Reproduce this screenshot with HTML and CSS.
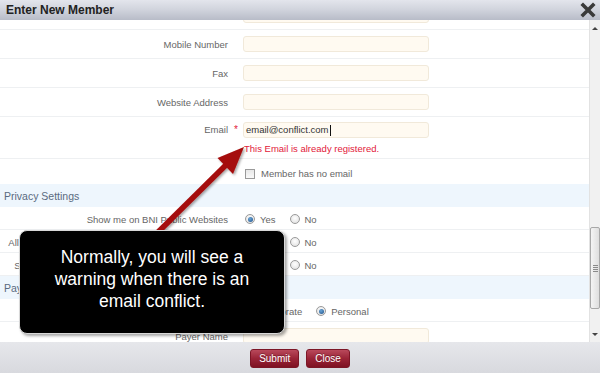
FILE: index.html
```html
<!DOCTYPE html>
<html>
<head>
<meta charset="utf-8">
<link rel="stylesheet" href="styles.css">
</head>
<body>
<div class="dialog">
  <div class="titlebar">
    <span class="title">Enter New Member</span>
    <svg class="close" width="16" height="16" viewBox="0 0 16 16"><path d="M3 3 L13 13 M13 3 L3 13" stroke="#3a3a3a" stroke-width="3.6" stroke-linecap="square"/></svg>
  </div>
  <div class="body">
    <div class="content">
      <div class="form">
        <div class="row"><div class="label"></div><div class="req"></div><div class="field"><div class="input"></div></div></div>
        <div class="row"><div class="label">Mobile Number</div><div class="req"></div><div class="field"><div class="input"></div></div></div>
        <div class="row"><div class="label">Fax</div><div class="req"></div><div class="field"><div class="input"></div></div></div>
        <div class="row"><div class="label">Website Address</div><div class="req"></div><div class="field"><div class="input"></div></div></div>
        <div class="row email-row">
          <div class="label">Email</div><div class="req">*</div>
          <div class="field col">
            <div class="input filled">email@conflict.com<span class="caret"></span></div>
            <div class="error">This Email is already registered.</div>
          </div>
        </div>
        <div class="row check-row"><div class="label"></div><div class="req"></div><div class="field"><span class="checkbox"></span><span class="opt">Member has no email</span></div></div>
        <div class="section">Privacy Settings</div>
        <div class="row small"><div class="label">Show me on BNI Public Websites</div><div class="req"></div><div class="field"><span class="radio on"></span><span class="opt">Yes</span><span class="radio"></span><span class="opt">No</span></div></div>
        <div class="row small"><div class="label">Allow all other BNI members to contact me via email</div><div class="req"></div><div class="field"><span class="radio on"></span><span class="opt">Yes</span><span class="radio"></span><span class="opt">No</span></div></div>
        <div class="row small"><div class="label">Show my contact details to the other BNI members</div><div class="req"></div><div class="field"><span class="radio on"></span><span class="opt">Yes</span><span class="radio"></span><span class="opt">No</span></div></div>
        <div class="section">Payment Details</div>
        <div class="row small"><div class="label">Payer Type</div><div class="req"></div><div class="field"><span class="radio"></span><span class="opt">Corporate</span><span class="radio on"></span><span class="opt">Personal</span></div></div>
        <div class="row"><div class="label">Payer Name</div><div class="req"></div><div class="field"><div class="input"></div></div></div>
      </div>
    </div>
    <div class="scrollbar">
      <div class="sb-btn"><span class="tri up"></span></div>
      <div class="sb-track"><div class="sb-thumb"><span class="grip"></span><span class="grip"></span><span class="grip"></span><span class="grip"></span></div></div>
      <div class="sb-btn"><span class="tri down"></span></div>
    </div>
  </div>
  <div class="footer">
    <button class="btn">Submit</button>
    <button class="btn">Close</button>
  </div>
  <svg class="arrow" width="600" height="373" viewBox="0 0 600 373">
    <defs>
      <filter id="sh" x="-20%" y="-20%" width="140%" height="140%">
        <feDropShadow dx="1.5" dy="1.5" stdDeviation="1.2" flood-color="#000" flood-opacity="0.35"/>
      </filter>
    </defs>
    <g filter="url(#sh)">
      <line x1="148" y1="242" x2="228" y2="163" stroke="#a50a0a" stroke-width="5.5"/>
      <polygon points="244,147 233,174 217.5,158" fill="#a50a0a"/>
    </g>
  </svg>
  <div class="callout">Normally, you will see a warning when there is an email conflict.</div>
</div>
</body>
</html>
```
FILE: styles.css
```css
html, body {
  margin: 0;
  padding: 0;
}
body {
  font-family: "Liberation Sans", Arial, sans-serif;
  background: #fff;
}
.dialog {
  position: relative;
  width: 600px;
  height: 373px;
  display: flex;
  flex-direction: column;
  overflow: hidden;
}
.titlebar {
  height: 20px;
  flex: none;
  display: flex;
  align-items: center;
  justify-content: space-between;
  padding: 0 4px 0 6px;
  background: linear-gradient(#e3e5ec, #d2d5de 45%, #b8bcc8);
}
.title {
  font-size: 12px;
  font-weight: bold;
  color: #222;
}
.close {
  display: block;
}
.body {
  flex: 1;
  display: flex;
  min-height: 0;
}
.content {
  flex: 1;
  overflow: hidden;
  background: #fff;
}
.form {
  margin-top: -19px;
}
.row {
  box-sizing: border-box;
  height: 29px;
  display: flex;
  align-items: center;
  border-bottom: 1px solid #eef0f2;
  font-size: 9.5px;
  color: #666;
}
.row.small {
  height: 23px;
  padding-top: 2px;
}
.label {
  width: 228px;
  flex: none;
  display: flex;
  justify-content: flex-end;
  white-space: nowrap;
}
.req {
  width: 15px;
  flex: none;
  color: #e2203a;
  font-size: 10px;
  padding-left: 6px;
  box-sizing: border-box;
}
.field {
  display: flex;
  align-items: center;
}
.field.col {
  flex-direction: column;
  align-items: flex-start;
}
.input {
  box-sizing: border-box;
  width: 186px;
  height: 16px;
  border: 1px solid #f1e9da;
  border-radius: 3px;
  background: #fffaf1;
  font-size: 9.5px;
  color: #333;
  padding-left: 2px;
  line-height: 14px;
  display: flex;
  align-items: center;
}
.caret {
  display: inline-block;
  width: 1px;
  height: 11px;
  background: #111;
  margin-left: 1px;
}
.email-row {
  height: 42px;
  align-items: flex-start;
  padding-top: 5px;
}
.email-row .label,
.email-row .req {
  line-height: 16px;
}
.error {
  margin-top: 4px;
  line-height: 13px;
  font-size: 9.5px;
  color: #e2203a;
  padding-left: 1px;
}
.check-row {
  height: 25px;
  border-bottom: none;
  padding-top: 4px;
}
.checkbox {
  box-sizing: border-box;
  width: 10px;
  height: 10px;
  border: 1px solid #9a9a9a;
  background: linear-gradient(#e8e8e8, #fafafa);
  margin: 0 6px 0 2px;
}
.section {
  box-sizing: border-box;
  height: 23px;
  background: #eef6fd;
  font-size: 10.5px;
  color: #5a6a80;
  padding-left: 4px;
  display: flex;
  align-items: center;
}
.radio {
  box-sizing: border-box;
  width: 10px;
  height: 10px;
  border-radius: 50%;
  border: 1px solid #9a9a9a;
  background: radial-gradient(circle at 50% 40%, #fff, #dcdcdc);
  margin: 0 5px 0 2px;
  position: relative;
}
.radio.on::after {
  content: "";
  position: absolute;
  left: 1.5px;
  top: 1.5px;
  width: 5px;
  height: 5px;
  border-radius: 50%;
  background: radial-gradient(circle at 40% 35%, #6aa6d8, #1d4f86);
}
.opt {
  margin-right: 12px;
  color: #666;
}
.scrollbar {
  width: 11px;
  flex: none;
  display: flex;
  flex-direction: column;
  background: #f1f1f1;
  border-left: 1px solid #e2e2e2;
  box-sizing: border-box;
}
.sb-btn {
  height: 14px;
  display: flex;
  align-items: center;
  justify-content: center;
}
.tri {
  width: 0;
  height: 0;
  border-left: 3px solid transparent;
  border-right: 3px solid transparent;
}
.tri.up {
  border-bottom: 3px solid #444;
  margin-top: 2px;
}
.tri.down {
  border-top: 3px solid #444;
  margin-top: -2px;
}
.sb-track {
  flex: 1;
}
.sb-thumb {
  box-sizing: border-box;
  margin-top: 193px;
  height: 82px;
  width: 10px;
  border: 1px solid #a8a8a8;
  border-radius: 2px;
  background: linear-gradient(90deg, #f4f4f4, #dedede);
  display: flex;
  flex-direction: column;
  align-items: center;
  justify-content: center;
  gap: 1px;
}
.grip {
  width: 5px;
  height: 1px;
  background: #8a8a8a;
}
.footer {
  height: 31px;
  flex: none;
  box-sizing: border-box;
  padding-top: 7px;
  display: flex;
  justify-content: center;
  align-items: flex-start;
  gap: 7px;
  background: linear-gradient(#e6e7eb, #d8d9de);
}
.btn {
  box-sizing: border-box;
  height: 19px;
  padding: 0 8px;
  border: 1px solid #7c1626;
  border-radius: 3px;
  background: linear-gradient(#b9495b, #9a2437 50%, #7e1222);
  color: #fff;
  font-family: "Liberation Sans", Arial, sans-serif;
  font-size: 10px;
  line-height: 17px;
  text-shadow: 0 -1px 0 rgba(0, 0, 0, 0.3);
}
.arrow {
  position: absolute;
  left: 0;
  top: 0;
  pointer-events: none;
}
.callout {
  position: absolute;
  left: 19px;
  top: 230px;
  width: 266px;
  height: 104px;
  box-sizing: border-box;
  background: #000;
  border: 1.5px solid #d8d8d8;
  border-radius: 8px;
  box-shadow: 2px 2px 3px rgba(0, 0, 0, 0.35);
  color: #fff;
  font-family: "Liberation Sans", Arial, sans-serif;
  font-size: 17.5px;
  line-height: 22px;
  text-align: center;
  padding: 15px 28px 0;
}
```
